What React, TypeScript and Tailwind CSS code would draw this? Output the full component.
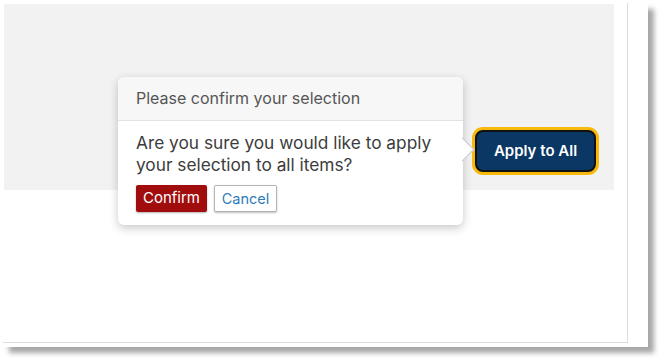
export default function App() {
  return (
    <div className="h-[359px] w-[661px] bg-white p-[3px] font-['Inter',sans-serif]">
      <div className="h-[344px] w-[645px] bg-white shadow-[6px_6px_5px_rgba(0,0,0,0.35)]">
        <div className="h-[340px] w-[625px] border-r border-b border-[#dcdcdc] pt-px pl-px">
          <div className="relative h-[186px] w-[610px] bg-[#f2f2f2]">
            <div className="flex justify-end pt-[123px] pr-[15px]">
              <div className="rounded-[11px] bg-[#f6b90c] p-[3px]">
                <button className="flex h-[42px] w-[121px] items-center justify-center rounded-[8px] border-2 border-[#111] bg-[#0b3764] text-[15px] font-semibold text-white">
                  Apply to All
                </button>
              </div>
            </div>

            <div className="absolute top-[73px] left-[114px] w-[345px] rounded-[6px] bg-white shadow-[0_3px_10px_rgba(0,0,0,0.22)]">
              <div className="flex h-[44px] items-center rounded-t-[6px] border-b border-[#e3e3e3] bg-[#f7f7f7] pb-[2px] pl-[18px] text-[16px] text-[#555]">
                Please confirm your selection
              </div>
              <div className="px-[18px] pt-[11px] pb-[13px]">
                <p className="text-[17.3px] leading-[22px] text-[#3c3c3c]">
                  Are you sure you would like to apply your selection to all items?
                </p>
                <div className="mt-[9px] flex gap-[7px]">
                  <button className="h-[27px] w-[71px] rounded-[2px] bg-[#a10d0d] text-[15px] text-white shadow-[0_1px_2px_rgba(0,0,0,0.3)]">
                    Confirm
                  </button>
                  <button className="h-[27px] w-[63px] rounded-[2px] border border-[#b5b5b5] bg-white text-[14.5px] text-[#2f7bb8] shadow-[0_1px_2px_rgba(0,0,0,0.25)]">
                    Cancel
                  </button>
                </div>
              </div>
              <div className="absolute top-[64px] right-[-8px] h-[17px] w-[17px] rotate-45 border-t border-r border-[#c4c4c4] bg-white" />
            </div>
          </div>
        </div>
      </div>
    </div>
  );
}
